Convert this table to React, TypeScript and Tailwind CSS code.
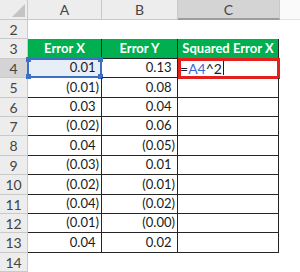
import { type ReactNode } from 'react';

const FONT = { fontFamily: 'Lato, "Open Sans", sans-serif' };

type DataRow = { n: number; h: string; a: string; b: string };

const DATA: DataRow[] = [
  { n: 4, h: 'h-[19px]', a: '0.01', b: '0.13' },
  { n: 5, h: 'h-[20px]', a: '(0.01)', b: '0.08' },
  { n: 6, h: 'h-[19px]', a: '0.03', b: '0.04' },
  { n: 7, h: 'h-[19px]', a: '(0.02)', b: '0.06' },
  { n: 8, h: 'h-[20px]', a: '0.04', b: '(0.05)' },
  { n: 9, h: 'h-[19px]', a: '(0.03)', b: '0.01' },
  { n: 10, h: 'h-[20px]', a: '(0.02)', b: '(0.01)' },
  { n: 11, h: 'h-[19px]', a: '(0.04)', b: '(0.02)' },
  { n: 12, h: 'h-[19px]', a: '(0.01)', b: '(0.00)' },
  { n: 13, h: 'h-[20px]', a: '0.04', b: '0.02' },
];

function RowHead({ n, active }: { n: number; active?: boolean }) {
  return (
    <div
      className={
        'flex w-[28px] shrink-0 items-center justify-center border-r border-b border-[#c9c9c9] text-[14px] text-[#444] ' +
        (active ? 'bg-[#d4d4d4]' : 'bg-[#ededed]')
      }>
      {n}
    </div>
  );
}

// accounting format: positives keep room for the closing paren
function Num({ v }: { v: string }) {
  const neg = v.startsWith('(');
  return (
    <span>
      {v}
      {!neg && <span className="invisible">)</span>}
    </span>
  );
}

function Cell({ w, children, className = '' }: { w: string; children?: ReactNode; className?: string }) {
  return (
    <div className={`relative flex shrink-0 items-center border-r border-b border-[#262626] ${w} ${className}`}>
      {children}
    </div>
  );
}

function Handle({ pos }: { pos: string }) {
  return <span className={`absolute size-[5px] bg-[#3f6fc4] ${pos}`} />;
}

export default function App() {
  return (
    <div className="h-[272px] w-[300px] overflow-hidden bg-white text-[13px] text-[#1a1a1a]" style={FONT}>
      {/* column headers */}
      <div className="flex h-[20px]">
        <div className="relative w-[28px] shrink-0 border-r border-b border-[#c9c9c9] bg-[#ededed]">
          <svg className="absolute right-[2px] bottom-[2px]" width="13" height="13" viewBox="0 0 13 13">
            <polygon points="13,0 13,13 0,13" fill="#c4c4c4" />
          </svg>
        </div>
        <div className="flex w-[74px] shrink-0 items-center justify-center border-r border-b border-[#c9c9c9] bg-[#ededed] text-[14px] text-[#444]">
          A
        </div>
        <div className="flex w-[76px] shrink-0 items-center justify-center border-r border-b border-[#c9c9c9] bg-[#ededed] text-[14px] text-[#444]">
          B
        </div>
        <div className="flex w-[102px] shrink-0 items-center justify-center border-r border-b-2 border-r-[#c9c9c9] border-b-[#9c9c9c] bg-[#d4d4d4] text-[14px] text-[#444]">
          C
        </div>
        <div className="flex-1 border-b border-[#e2e2e2] bg-[#fafafa]" />
      </div>

      {/* row 2 */}
      <div className="flex h-[19px]">
        <RowHead n={2} />
      </div>

      {/* row 3: table heading */}
      <div className="flex h-[20px]">
        <RowHead n={3} />
        <Cell w="w-[74px]" className="justify-center bg-[#00b050] font-bold text-white">
          Error X
        </Cell>
        <Cell w="w-[76px]" className="justify-center bg-[#00b050] font-bold text-white">
          Error Y
        </Cell>
        <Cell w="w-[101px]" className="justify-center bg-[#00b050] font-bold text-white">
          Squared Error X
        </Cell>
      </div>

      {DATA.map((r) => (
        <div key={r.n} className={`flex ${r.h}`}>
          <RowHead n={r.n} active={r.n === 4} />
          <Cell w="w-[74px]" className={`justify-end pr-[2px] ${r.n === 4 ? 'bg-[#e8eef8]' : ''}`}>
            <Num v={r.a} />
            {r.n === 4 && (
              <div className="absolute -top-[1px] -left-[1px] -right-[1px] -bottom-[1px] border-2 border-[#3f6fc4]">
                <Handle pos="-top-[3px] -left-[3px]" />
                <Handle pos="-top-[3px] -right-[3px]" />
                <Handle pos="-bottom-[3px] -left-[3px]" />
                <Handle pos="-bottom-[3px] -right-[3px]" />
              </div>
            )}
          </Cell>
          <Cell w="w-[76px]" className="justify-end pr-[2px]">
            <Num v={r.b} />
          </Cell>
          <Cell w="w-[101px]" className="pl-[2px]">
            {r.n === 4 && (
              <>
                <span className="text-[14px]">=</span>
                <span className="text-[14px] text-[#3a6bd0]">A4</span>
                <span className="text-[14px]">^2</span>
                <span className="ml-[1px] h-[14px] w-px bg-[#1a1a1a]" />
                <div className="absolute -top-[1px] left-0 -right-[2px] -bottom-[2px] border-[3px] border-[#e3201e]" />
              </>
            )}
          </Cell>
        </div>
      ))}

      {/* row 14 */}
      <div className="flex h-[19px]">
        <RowHead n={14} />
      </div>
    </div>
  );
}
